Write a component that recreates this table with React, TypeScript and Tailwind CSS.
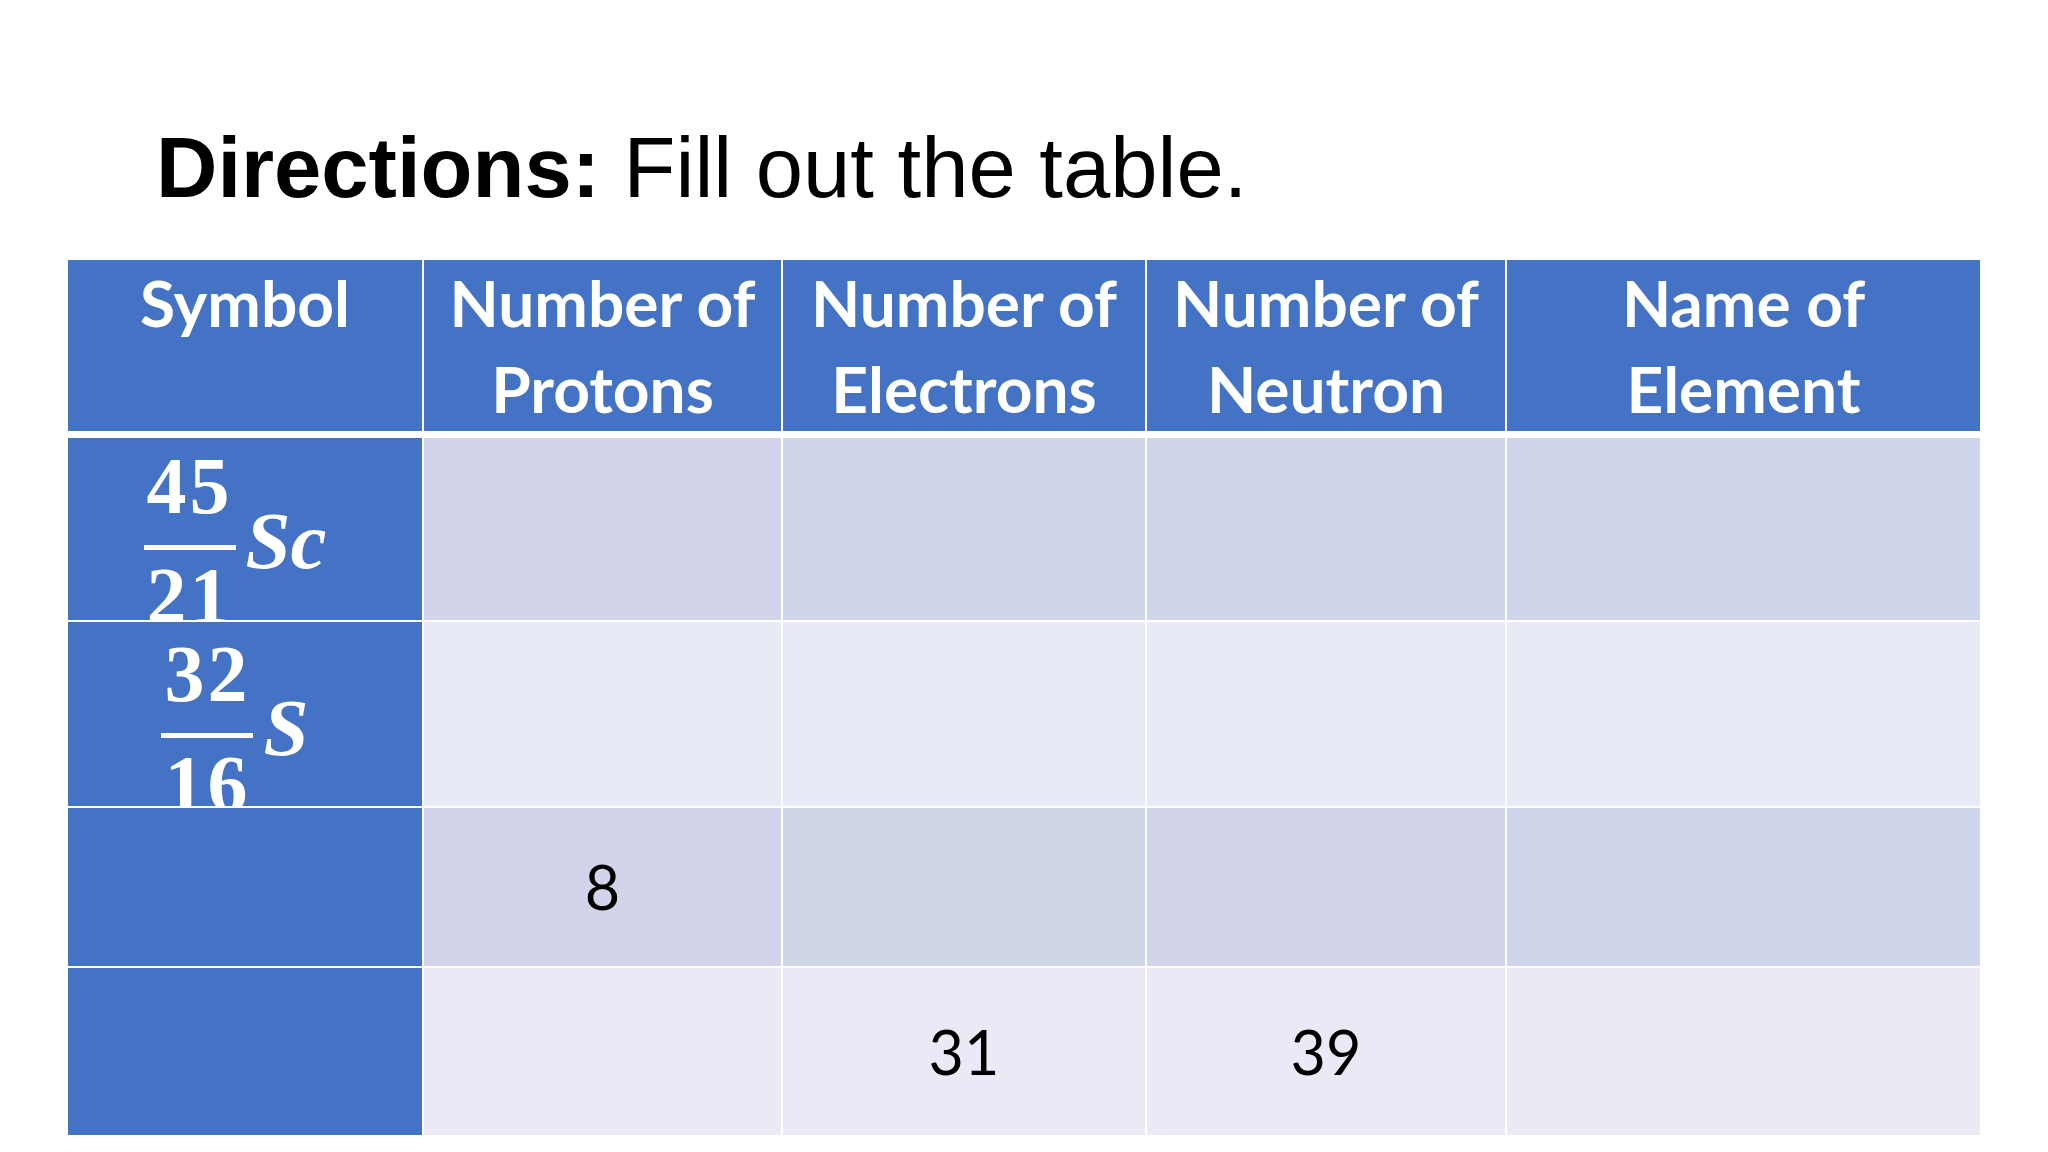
import React from 'react';

const cols = 'grid grid-cols-[354px_357px_362px_358px_473px] grid-rows-1 gap-x-[2px]';

const headers = [
  ['Symbol'],
  ['Number of', 'Protons'],
  ['Number of', 'Electrons'],
  ['Number of', 'Neutron'],
  ['Name of', 'Element'],
];

type Row = {
  h: string;
  iso?: { mass: string; z: string; sym: string; top: string; symTop: string };
  cells: { bg: string; text?: string }[];
};

const rows: Row[] = [
  {
    h: 'h-[182px]',
    iso: { mass: '45', z: '21', sym: 'Sc', top: 'pt-[8px]', symTop: 'mt-[55px]' },
    cells: [{ bg: 'bg-[#D2D4EC]' }, { bg: 'bg-[#CFD6E9]' }, { bg: 'bg-[#CFD6E9]' }, { bg: 'bg-[#CFD5EA]' }],
  },
  {
    h: 'h-[184px]',
    iso: { mass: '32', z: '16', sym: 'S', top: 'pt-[12px]', symTop: 'mt-[54px]' },
    cells: [{ bg: 'bg-[#E8EAF5]' }, { bg: 'bg-[#E8EBF5]' }, { bg: 'bg-[#E8EBF5]' }, { bg: 'bg-[#E8EAF5]' }],
  },
  {
    h: 'h-[158px]',
    cells: [{ bg: 'bg-[#D2D4EC]', text: '8' }, { bg: 'bg-[#CED6E8]' }, { bg: 'bg-[#D2D4EC]' }, { bg: 'bg-[#CFD5EA]' }],
  },
  {
    h: 'h-[167px]',
    cells: [{ bg: 'bg-[#EAE9F5]' }, { bg: 'bg-[#EAE9F5]', text: '31' }, { bg: 'bg-[#EAE9F5]', text: '39' }, { bg: 'bg-[#EAEAF5]' }],
  },
];

function Isotope({ iso }: { iso: NonNullable<Row['iso']> }) {
  return (
    <div className={`flex h-full items-start justify-center pr-[20px] ${iso.top}`}>
      <div className="flex flex-col items-stretch font-['Liberation_Serif',serif] font-bold text-white">
        <div className="px-[3px] text-center text-[80px] leading-[80px] tracking-[3px]">{iso.mass}</div>
        <div className="mt-[19px] h-[5px] bg-white" />
        <div className="mt-[6px] px-[3px] text-center text-[80px] leading-[80px] tracking-[3px]">{iso.z}</div>
      </div>
      <div className={`ml-[10px] font-['Liberation_Serif',serif] text-[81px] font-bold italic leading-[80px] text-white ${iso.symTop}`}>
        {iso.sym}
      </div>
    </div>
  );
}

export default function App() {
  return (
    <div className="flex h-[1152px] w-[2048px] flex-col bg-white">
      <h1 className="pl-[156px] pt-[126px] font-['Liberation_Sans',Arial,sans-serif] text-[85px] leading-[84px] text-black">
        <span className="font-bold">Directions:</span> Fill out the table.
      </h1>

      <div className="ml-[68px] mt-[50px] w-[1912px] bg-white font-['Lato',sans-serif]">
        <div className={`${cols} h-[171px]`}>
          {headers.map((lines, i) => (
            <div key={i} className="bg-[#4472C4] text-center text-[64px] font-bold leading-[86px] text-white">
              {lines.map((l) => (
                <div key={l}>{l}</div>
              ))}
            </div>
          ))}
        </div>

        <div className="mt-[7px] flex flex-col gap-y-[2px]">
          {rows.map((r, ri) => (
            <div key={ri} className={`${cols} ${r.h}`}>
              <div className="min-h-0 overflow-hidden bg-[#4472C4]">{r.iso && <Isotope iso={r.iso} />}</div>
              {r.cells.map((c, ci) => (
                <div key={ci} className={`flex items-center justify-center ${c.bg} text-[61px] text-black`}>
                  {c.text}
                </div>
              ))}
            </div>
          ))}
        </div>
      </div>
    </div>
  );
}
